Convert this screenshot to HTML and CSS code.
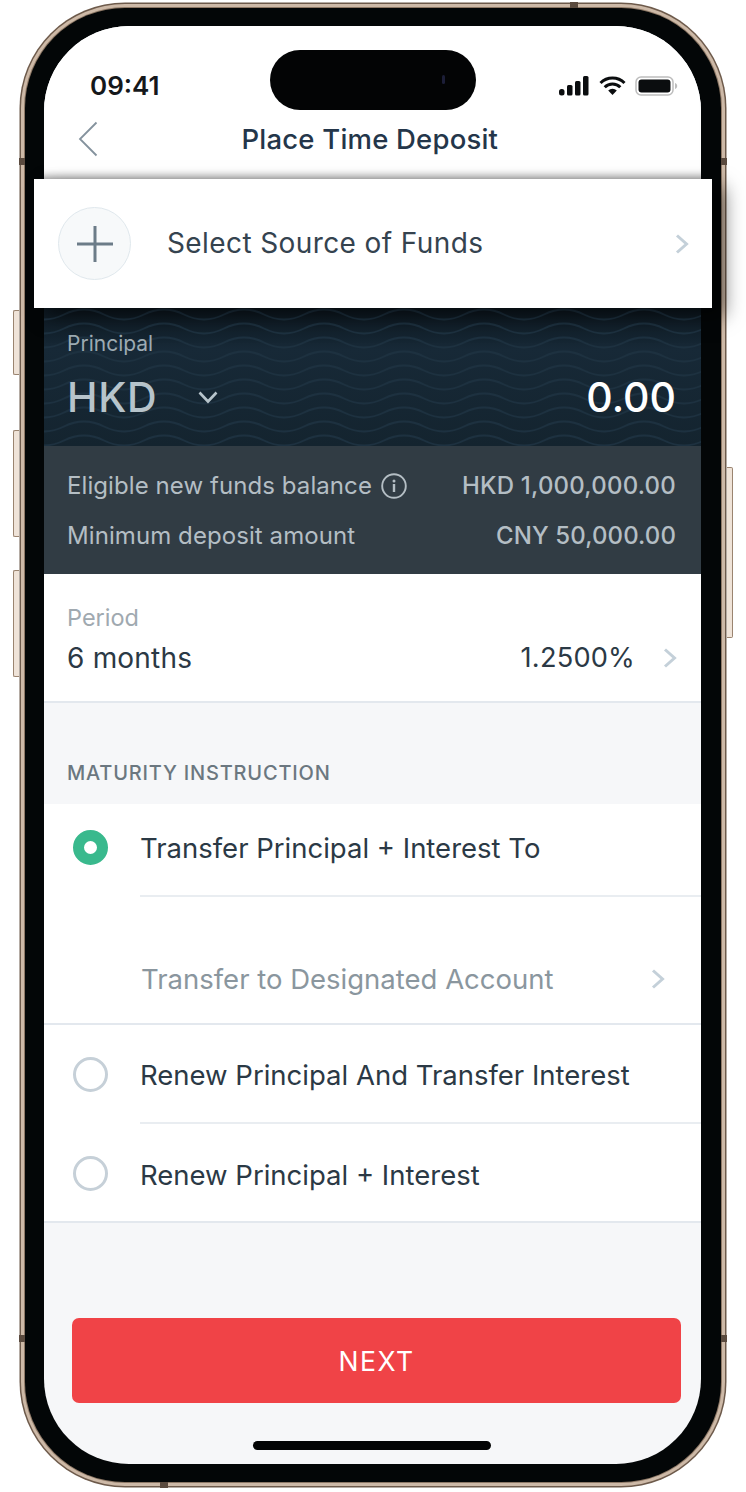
FILE: index.html
```html
<!DOCTYPE html>
<html lang="en">
<head>
<meta charset="utf-8">
<title>Place Time Deposit</title>
<link rel="stylesheet" href="styles.css">
</head>
<body>
<div class="device">
  <i class="side side-l1"></i><i class="side side-l2"></i><i class="side side-l3"></i><i class="side side-r1"></i>
  <i class="band band-lt"></i><i class="band band-rt"></i><i class="band band-lb"></i><i class="band band-rb"></i><i class="band band-top"></i><i class="band band-bot"></i>
  <div class="screen">
    <header class="top">
      <div class="status">
        <span class="time">09:41</span>
        <div class="island"><i class="lens"></i></div>
        <div class="status-icons">
          <svg class="ic-signal" viewBox="0 0 31 20"><rect x="0" y="13" width="5.5" height="6.5" rx="2.5"/><rect x="8" y="9" width="5.5" height="10.5" rx="1.5"/><rect x="16" y="5" width="5.5" height="14.5" rx="1.5"/><rect x="24" y="0" width="5.5" height="19.5" rx="1.5"/></svg>
          <svg class="ic-wifi" viewBox="0 0 27 20"><path d="M1.5 7a17 17 0 0 1 24 0M5.7 11.2a11 11 0 0 1 15.6 0" fill="none" stroke="#0b0d0f" stroke-width="3"/><path d="M9.2 14.5a6 6 0 0 1 8.6 0L13.5 19z" fill="#0b0d0f"/></svg>
          <svg class="ic-batt" viewBox="0 0 43 20"><rect x="1" y="1" width="37" height="18" rx="5" fill="none" stroke="#bdbdbd" stroke-width="1.5"/><rect x="3.5" y="3.5" width="32" height="13" rx="3" fill="#0b0d0f"/><path d="M40 7c1.5.5 2.2 1.6 2.2 3s-.7 2.500-2.200 3z" fill="#bdbdbd"/></svg>
        </div>
      </div>
      <div class="nav">
        <svg class="back" viewBox="0 0 20 36"><path d="M18.500 1.500 2 18l16.500 16.500" fill="none" stroke="#84929d" stroke-width="1.800"/></svg>
        <h1 class="title">Place Time Deposit</h1>
      </div>
    </header>

    <div class="source">
      <div class="plus"><svg viewBox="0 0 36 36"><path d="M18 0v36M0 18h36" fill="none" stroke="#6c7c88" stroke-width="3"/></svg></div>
      <span class="source-label">Select Source of Funds</span>
      <svg class="chev chev-card" viewBox="0 0 14 20"><path d="M2 1.500 11.500 10 2 18.500" fill="none" stroke="#c4d0d9" stroke-width="3"/></svg>
    </div>

    <section class="hero">
      <svg class="waves" width="100%" height="100%"><defs><pattern id="wave" width="80" height="14" patternUnits="userSpaceOnUse"><path d="M0 11.500C20 11.500 20 1.500 40 1.500S60 11.500 80 11.500" fill="none" stroke="#1d3140" stroke-width="1.800"/></pattern></defs><rect width="100%" height="100%" fill="url(#wave)"/></svg>
      <div class="hero-label">Principal</div>
      <div class="hero-row">
        <span class="currency">HKD</span>
        <svg class="caret" viewBox="0 0 20 13"><path d="M1.500 1.500 10 10.500l8.500-9" fill="none" stroke="#b7c4cb" stroke-width="2.600"/></svg>
        <span class="amount">0.00</span>
      </div>
    </section>

    <section class="info">
      <div class="info-row">
        <span>Eligible new funds balance</span>
        <svg class="ic-info" viewBox="0 0 26 26"><circle cx="13" cy="13" r="11.800" fill="none" stroke="#b4bec4" stroke-width="1.900"/><circle cx="13" cy="8" r="1.500" fill="#b4bec4"/><rect x="11.800" y="11" width="2.400" height="8" fill="#b4bec4"/></svg>
        <span class="value value-wide">HKD 1,000,000.00</span>
      </div>
      <div class="info-row">
        <span>Minimum deposit amount</span>
        <span class="value">CNY 50,000.00</span>
      </div>
    </section>

    <section class="period">
      <div class="period-label">Period</div>
      <div class="period-row">
        <span>6 months</span>
        <span class="rate">1.2500%</span>
        <svg class="chev" viewBox="0 0 14 20"><path d="M2 1.500 11.500 10 2 18.500" fill="none" stroke="#c4d0d9" stroke-width="3"/></svg>
      </div>
    </section>

    <h2 class="section-title">MATURITY INSTRUCTION</h2>

    <ul class="options">
      <li class="option option-open">
        <div class="option-main">
          <i class="radio radio-on"></i>
          <span class="option-text">Transfer Principal + Interest To</span>
        </div>
        <div class="option-sub">
          <span>Transfer to Designated Account</span>
          <svg class="chev" viewBox="0 0 14 20"><path d="M2 1.500 11.500 10 2 18.500" fill="none" stroke="#c4d0d9" stroke-width="3"/></svg>
        </div>
      </li>
      <li class="option option-mid">
        <div class="option-main">
          <i class="radio"></i>
          <span class="option-text">Renew Principal And Transfer Interest</span>
        </div>
      </li>
      <li class="option option-last">
        <div class="option-main">
          <i class="radio"></i>
          <span class="option-text">Renew Principal + Interest</span>
        </div>
      </li>
    </ul>

    <div class="footer">
      <button class="next" type="button">NEXT</button>
      <i class="home"></i>
    </div>
  </div>
</div>
</body>
</html>
```
FILE: styles.css
```css
* { box-sizing: border-box; }
html, body { margin: 0; padding: 0; background: #fff; overflow: hidden; }
body { width: 746px; height: 1492px; font-family: Inter, "Liberation Sans", sans-serif; color: #2b3945; }

.device {
  position: relative;
  width: 696px;
  height: 1474px;
  margin: 8px 0 0 25px;
  padding: 18px 20px 18px 19px;
  background: #030607;
  border-radius: 100px;
  box-shadow: 0 0 0 1px #8d7866, 0 0 0 4px #cdb9a7, 0 0 0 5.5px #6d5a4b;
}
.side { position: absolute; width: 6px; background: #efe3d8; border: 1px solid #9a8470; }
.side-l1 { left: -12px; top: 302px; height: 65px; border-right: 0; border-radius: 2px 0 0 2px; }
.side-l2 { left: -12px; top: 422px; height: 107px; border-right: 0; border-radius: 2px 0 0 2px; }
.side-l3 { left: -12px; top: 562px; height: 107px; border-right: 0; border-radius: 2px 0 0 2px; }
.side-r1 { right: -12px; top: 459px; height: 171px; border-left: 0; border-radius: 0 2px 2px 0; }
.band { position: absolute; background: #5a4a3e; }
.band-lt, .band-lb, .band-rt, .band-rb { width: 6px; height: 7px; }
.band-lt { left: -6px; top: 150px; }
.band-rt { right: -6px; top: 150px; }
.band-lb { left: -6px; top: 1327px; }
.band-rb { right: -6px; top: 1327px; }
.band-top, .band-bot { width: 8px; height: 6px; }
.band-top { left: 545px; top: -6px; }
.band-bot { left: 135px; bottom: -6px; }

.screen {
  display: flex;
  flex-direction: column;
  height: 100%;
  background: #f6f7f9;
  border-radius: 85px;
}

.top { background: #fff; border-radius: 85px 85px 0 0; height: 153px; display: flex; flex-direction: column; box-shadow: inset 0 -10px 8px -8px rgba(0,0,0,.4); }
.status { position: relative; height: 84px; display: flex; align-items: flex-start; justify-content: space-between; padding: 45px 23px 0 46px; }
.time { font-size: 26px; line-height: 30px; font-weight: 600; color: #15181b; }
.island { position: absolute; left: 226px; top: 24px; width: 206px; height: 60px; border-radius: 30px; background: #030405; }
.lens { position: absolute; left: 172px; top: 25px; width: 3px; height: 9px; border-radius: 2px; background: #1c1e38; }
.status-icons { display: flex; align-items: center; gap: 9px; padding-top: 5px; }
.ic-signal { width: 31px; height: 20px; fill: #0b0d0f; }
.ic-wifi { width: 27px; height: 20px; }
.ic-batt { width: 43px; height: 20px; }

.nav { display: flex; align-items: center; height: 58px; padding-left: 34px; }
.back { width: 20px; height: 36px; flex: none; }
.title { margin: 0 0 0 143.500px; font-size: 27.500px; line-height: 34px; font-weight: 500; letter-spacing: .2px; color: #24364a; }

.source {
  position: relative;
  z-index: 2;
  flex: none;
  display: flex;
  align-items: center;
  height: 129px;
  margin: 0 -11px 0 -10px;
  padding: 0 23px 0 24px;
  background: #fff;
  box-shadow: 12px 8px 18px rgba(0,0,0,.55);
}
.plus { width: 73px; height: 73px; border-radius: 50%; background: #f7f9fa; border: 1.500px solid #e0e8ed; display: flex; align-items: center; justify-content: center; flex: none; }
.plus svg { width: 36px; height: 36px; }
.source-label { flex: 1; margin: 0 0 1px 36px; font-size: 28px; line-height: 34px; letter-spacing: .4px; color: #35434f; }
.chev { width: 14px; height: 20px; flex: none; }

.hero { position: relative; height: 138px; flex: none; background: linear-gradient(#0d1820, #172937 30%, #14242f); padding: 22px 25px 0 23px; overflow: hidden; }
.waves { position: absolute; left: 0; top: 0; }
.hero-label, .hero-row { position: relative; }
.hero-label { font-size: 21px; line-height: 28px; color: #9dabb3; }
.hero-row { display: flex; align-items: center; margin-top: 14px; height: 50px; }
.currency { font-size: 41px; line-height: 50px; font-weight: 500; letter-spacing: .7px; color: #b7c4cb; }
.caret { width: 20px; height: 13px; margin-left: 41px; flex: none; }
.amount { margin-left: auto; font-size: 41px; line-height: 50px; font-weight: 500; color: #fff; }

.info { height: 128px; flex: none; background: #313c44; padding: 15px 25px 0 23px; color: #b4bec4; font-size: 24px; }
.info-row { display: flex; align-items: center; height: 50px; line-height: 30px; letter-spacing: .08px; }
.ic-info { width: 26px; height: 26px; margin-left: 9px; flex: none; }
.value { margin-left: auto; font-weight: 500; letter-spacing: .1px; }
.value-wide { letter-spacing: .22px; }

.period { height: 129px; flex: none; background: #fff; border-bottom: 2px solid #e3e8ee; padding: 29px 24px 0 23px; }
.period-label { font-size: 23.500px; line-height: 30px; color: #a0a9b0; }
.period-row { display: flex; align-items: center; margin-top: 9px; font-size: 28px; line-height: 32px; letter-spacing: .2px; color: #2b3945; }
.rate { margin-left: auto; font-size: 27.200px; }
.period-row .chev { margin-left: 28px; }

.section-title { margin: 0; height: 101px; flex: none; padding: 55px 0 0 23px; font-size: 20px; line-height: 30px; font-weight: 500; letter-spacing: .8px; color: #6b7780; }

.options { list-style: none; margin: 0; padding: 0; background: #fff; flex: none; }
.option { border-bottom: 2px solid #e3e8ee; }
.option-main { display: flex; align-items: center; padding-left: 29px; gap: 32px; }
.radio { width: 35px; height: 35px; margin-bottom: 2px; border-radius: 50%; border: 3px solid #c6d0d8; background: #fff; flex: none; }
.radio-on { border: 11.500px solid #39b98d; }
.option-text { font-size: 27.500px; line-height: 34px; color: #2b3945; }

.option-open { height: 221px; }
.option-open .option-main { position: relative; height: 93px; padding-bottom: 5px; }
.option-open .option-main::after { content: ""; position: absolute; left: 96px; right: 0; bottom: 0; height: 2px; background: #e9edf1; }
.option-sub { display: flex; align-items: center; justify-content: space-between; height: 126px; padding: 38px 36px 0 97px; font-size: 27.500px; color: #8a969e; }

.option-mid { height: 99px; padding-top: 3px; border-bottom: 0; }
.option-mid .option-main { height: 94px; }
.option-mid::after { content: ""; display: block; height: 2px; margin-left: 96px; background: #e9edf1; }

.option-last { height: 99px; padding-top: 4px; }
.option-last .option-main { height: 93px; }

.footer { flex: 1; display: flex; flex-direction: column; align-items: center; padding-top: 95px; }
.next { display: block; width: 609px; height: 85px; margin-left: 8px; flex: none; border: 0; border-radius: 7px; background: #f04347; color: #fff; font: 400 26.500px/87px Inter, sans-serif; letter-spacing: 1.500px; padding: 0; }
.home { display: block; width: 238px; height: 9px; margin: 38px 0 0 -2px; border-radius: 5px; background: #030405; flex: none; }
```
